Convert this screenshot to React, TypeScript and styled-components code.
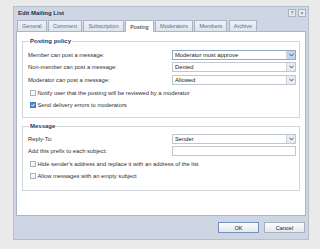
import styled, { createGlobalStyle } from 'styled-components';

const Global = createGlobalStyle`
  html, body {
    margin: 0;
    padding: 0;
    background: #eaeaea;
  }
  body {
    font-family: "Liberation Sans", Arial, sans-serif;
    font-size: 5.8px;
    color: #2f2f2f;
  }
`;

const Page = styled.div`
  width: 320px;
  height: 249px;
  padding: 6px 0 0 13px;
  box-sizing: border-box;
`;

const Dialog = styled.div`
  width: 296px;
  height: 234px;
  box-sizing: border-box;
  border: 1px solid #b4bfcc;
  background: #cdd6e2;
  display: flex;
  flex-direction: column;
  padding: 0 2px;
`;

const TitleBar = styled.div`
  height: 12px;
  display: flex;
  align-items: center;
  justify-content: space-between;
  padding: 0 0 0 2px;
`;

const Title = styled.div`
  font-weight: bold;
  font-size: 6px;
  color: #1d2f4d;
`;

const TitleButtons = styled.div`
  display: flex;
  gap: 2px;
`;

const TitleButton = styled.span`
  width: 6px;
  height: 6px;
  border: 1px solid #a9b5c5;
  background: #e6ecf3;
  color: #6a7a90;
  font-size: 5px;
  line-height: 6px;
  text-align: center;
  font-weight: bold;
`;

const Tabs = styled.div`
  display: flex;
  gap: 1.5px;
  padding-left: 1px;
  height: 12px;
  align-items: flex-end;
`;

const Tab = styled.div<{ $active?: boolean }>`
  height: ${p => (p.$active ? '12px' : '11.5px')};
  box-sizing: border-box;
  padding: 0 4px;
  display: flex;
  align-items: center;
  border: 1px solid #aab6c6;
  border-bottom: none;
  background: ${p => (p.$active ? '#ffffff' : 'linear-gradient(#eef2f7, #dde4ed)')};
  color: ${p => (p.$active ? '#222' : '#5e6d82')};
  font-size: 5.5px;
  margin-bottom: ${p => (p.$active ? '-1px' : '0')};
  position: relative;
`;

const Panel = styled.div`
  height: 185px;
  box-sizing: border-box;
  background: #ffffff;
  border: 1px solid #aab6c6;
  padding: 6px 5px 0 5px;
  display: flex;
  flex-direction: column;
  gap: 4.5px;
`;

const Fieldset = styled.fieldset<{ $h: number }>`
  margin: 0;
  padding: 3.5px 3px 0 5px;
  border: 1px solid #cfd5dd;
  height: ${p => p.$h}px;
  box-sizing: border-box;
  flex-shrink: 0;
`;

const Legend = styled.legend`
  font-weight: bold;
  color: #1f3a68;
  font-size: 6px;
  line-height: 7px;
  padding: 0 1px;
  margin-left: 1px;
`;

const Row = styled.div<{ $h: number }>`
  display: flex;
  align-items: center;
  height: ${p => p.$h}px;
`;

const Label = styled.span`
  width: 144px;
`;

const Select = styled.div<{ $focus?: boolean }>`
  flex: 1;
  height: 10px;
  box-sizing: border-box;
  border: 1px solid ${p => (p.$focus ? '#93a8c6' : '#bfc7d1')};
  background: #fff;
  display: flex;
  align-items: center;
  padding-left: 2px;
  color: #222;
`;

const SelectText = styled.span`
  flex: 1;
`;

const Arrow = styled.span<{ $focus?: boolean }>`
  width: 8px;
  height: 8px;
  background: ${p => (p.$focus ? '#c3d4ec' : '#e8ecf1')};
  border-left: 1px solid #cdd4dd;
  display: flex;
  align-items: center;
  justify-content: center;
`;

const TextInput = styled.div`
  flex: 1;
  height: 10px;
  box-sizing: border-box;
  border: 1px solid #bfc7d1;
  background: #fff;
`;

const CheckRow = styled.div<{ $h: number }>`
  display: flex;
  align-items: center;
  height: ${p => p.$h}px;
  gap: 1.5px;
  padding-left: 2px;
`;

const Box = styled.span<{ $checked?: boolean }>`
  width: 6px;
  height: 6px;
  box-sizing: border-box;
  border: 1px solid ${p => (p.$checked ? '#3f78c4' : '#aab3be')};
  background: ${p => (p.$checked ? '#4d8ad6' : 'linear-gradient(#ffffff, #eef1f4)')};
  display: flex;
  align-items: center;
  justify-content: center;
`;

const Footer = styled.div`
  flex: 1;
  display: flex;
  justify-content: flex-end;
  align-items: center;
  gap: 5px;
  padding-right: 1px;
`;

const Button = styled.div<{ $primary?: boolean }>`
  width: 41px;
  height: 11px;
  box-sizing: border-box;
  border: 1px solid ${p => (p.$primary ? '#7391bf' : '#a7b1be')};
  background: linear-gradient(#fbfcfd, #e4e8ee);
  display: flex;
  align-items: center;
  justify-content: center;
  color: #222;
  font-size: 5.6px;
`;

const Chevron = () => (
  <svg width="5" height="4" viewBox="0 0 5 4">
    <path d="M0.5 0.8 L2.5 3 L4.5 0.8" fill="none" stroke="#4a5a70" strokeWidth="1" />
  </svg>
);

const Tick = () => (
  <svg width="4" height="4" viewBox="0 0 4 4">
    <path d="M0.5 2 L1.6 3.2 L3.6 0.7" fill="none" stroke="#fff" strokeWidth="0.9" />
  </svg>
);

const SelectBox = ({ value, focus }: { value: string; focus?: boolean }) => (
  <Select $focus={focus}>
    <SelectText>{value}</SelectText>
    <Arrow $focus={focus}>
      <Chevron />
    </Arrow>
  </Select>
);

const tabs = ['General', 'Comment', 'Subscription', 'Posting', 'Moderators', 'Members', 'Archive'];

export default function App() {
  return (
    <>
      <Global />
      <Page>
        <Dialog>
          <TitleBar>
            <Title>Edit Mailing List</Title>
            <TitleButtons>
              <TitleButton>?</TitleButton>
              <TitleButton>×</TitleButton>
            </TitleButtons>
          </TitleBar>
          <Tabs>
            {tabs.map(t => (
              <Tab key={t} $active={t === 'Posting'}>
                {t}
              </Tab>
            ))}
          </Tabs>
          <Panel>
            <Fieldset $h={80}>
              <Legend>Posting policy</Legend>
              <Row $h={12.6}>
                <Label>Member can post a message:</Label>
                <SelectBox value="Moderator must approve" focus />
              </Row>
              <Row $h={12.6}>
                <Label>Non-member can post a message:</Label>
                <SelectBox value="Denied" />
              </Row>
              <Row $h={12.6}>
                <Label>Moderator can post a message:</Label>
                <SelectBox value="Allowed" />
              </Row>
              <CheckRow $h={12.6}>
                <Box />
                <span>Notify user that the posting will be reviewed by a moderator</span>
              </CheckRow>
              <CheckRow $h={12.6}>
                <Box $checked>
                  <Tick />
                </Box>
                <span>Send delivery errors to moderators</span>
              </CheckRow>
            </Fieldset>
            <Fieldset $h={68}>
              <Legend>Message</Legend>
              <Row $h={12.3}>
                <Label>Reply-To:</Label>
                <SelectBox value="Sender" />
              </Row>
              <Row $h={12.3}>
                <Label>Add this prefix to each subject:</Label>
                <TextInput />
              </Row>
              <CheckRow $h={12.3}>
                <Box />
                <span>Hide sender's address and replace it with an address of the list</span>
              </CheckRow>
              <CheckRow $h={12.3}>
                <Box />
                <span>Allow messages with an empty subject</span>
              </CheckRow>
            </Fieldset>
          </Panel>
          <Footer>
            <Button $primary>OK</Button>
            <Button>Cancel</Button>
          </Footer>
        </Dialog>
      </Page>
    </>
  );
}
